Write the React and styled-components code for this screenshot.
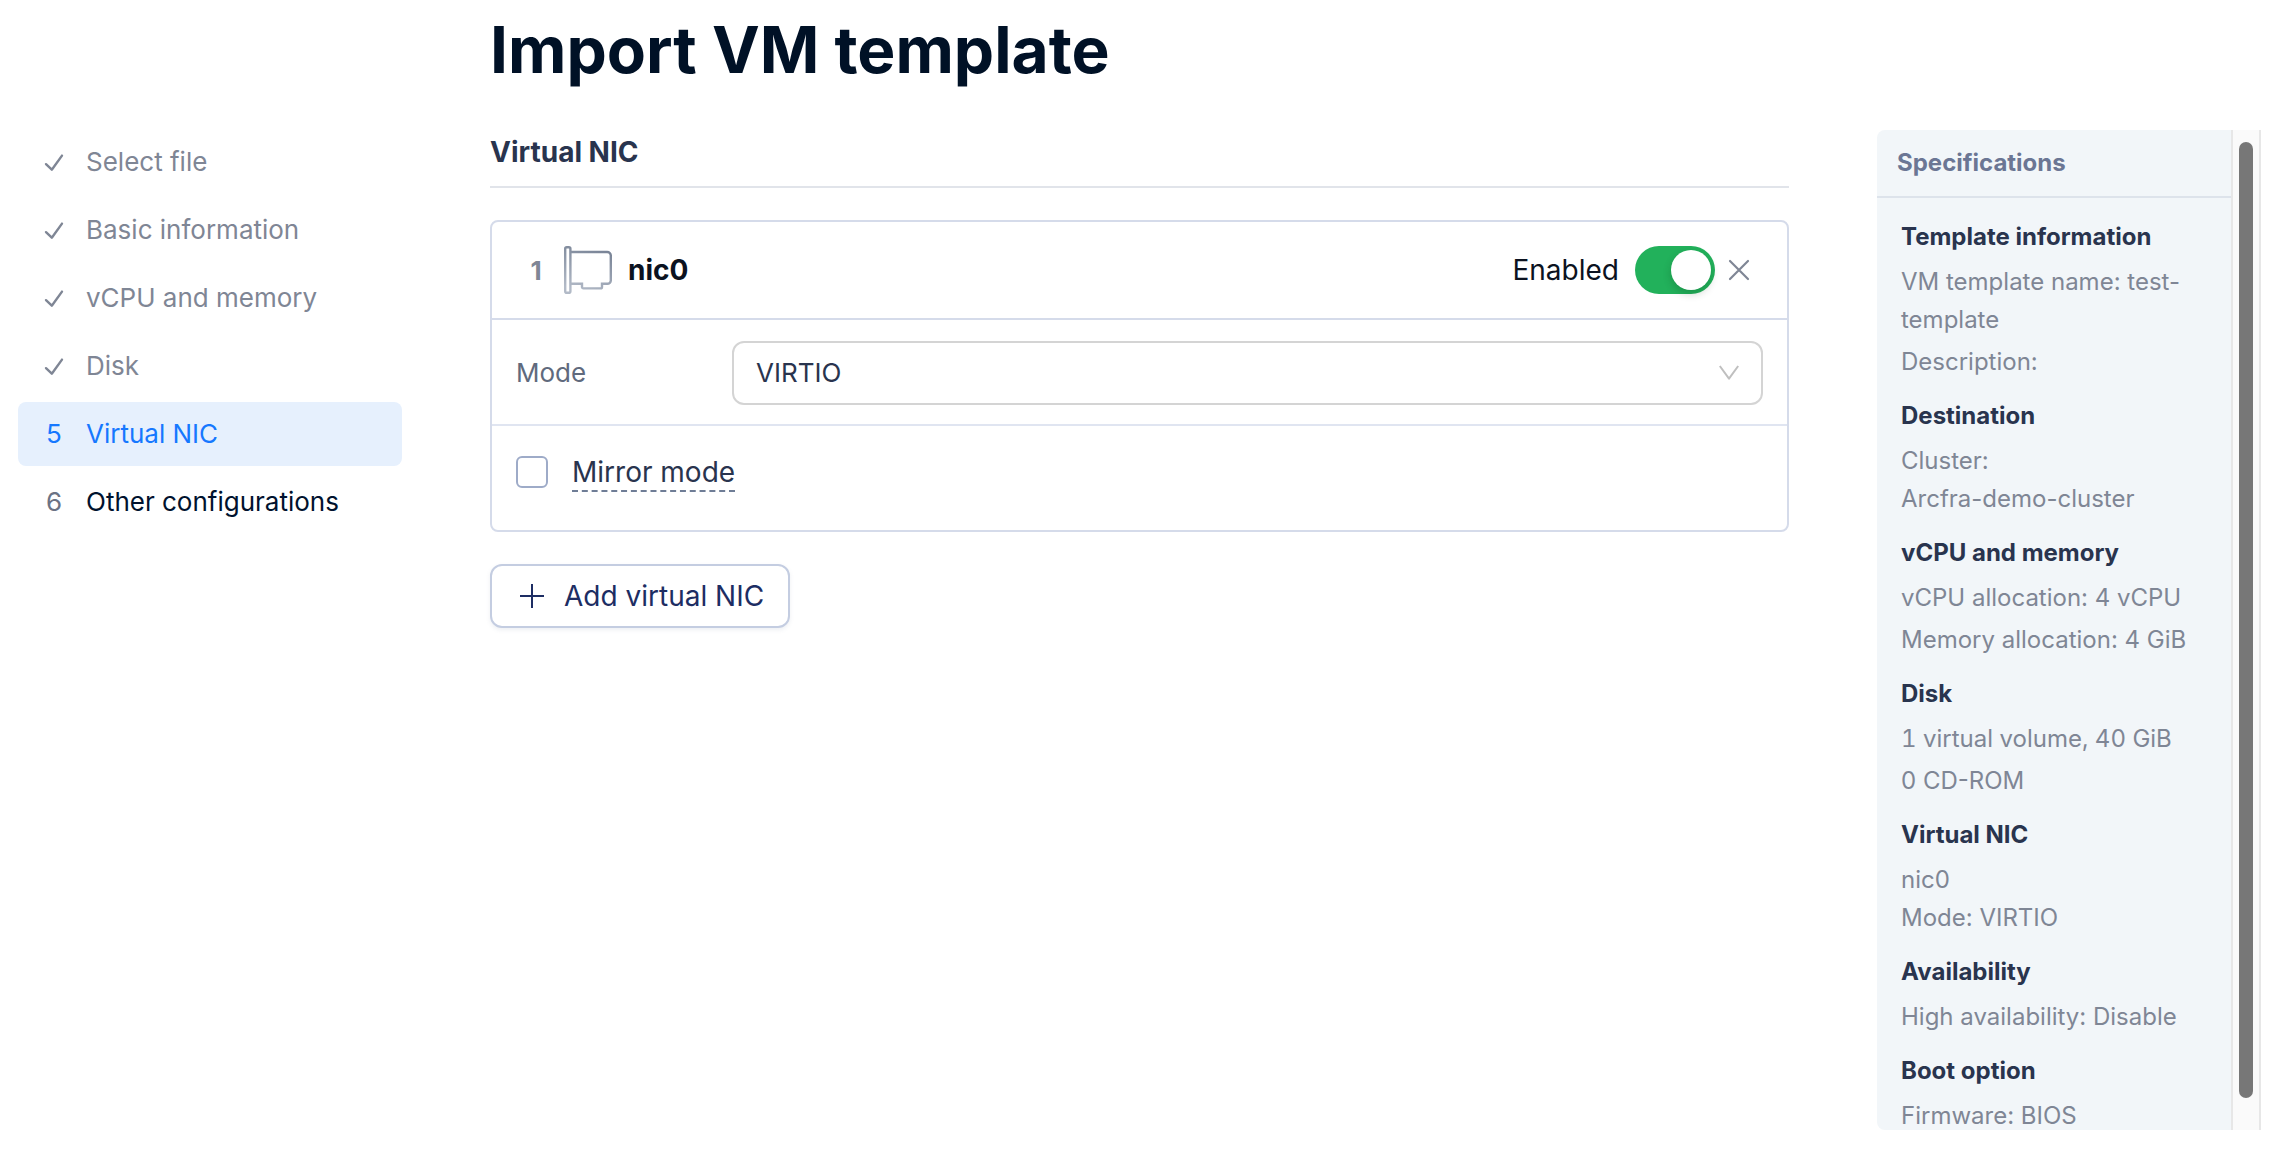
import React, { useState } from "react";
import styled, { createGlobalStyle } from "styled-components";

const GlobalStyle = createGlobalStyle`
  *, *::before, *::after { box-sizing: border-box; }
  body {
    margin: 0;
    background: #fff;
    color: #00122e;
    font-family: Inter, "Liberation Sans", sans-serif;
    font-size: 28px;
    -webkit-font-smoothing: antialiased;
  }
  button, select, input { font: inherit; color: inherit; margin: 0; }
  h1, h2, h3, p, ol { margin: 0; padding: 0; }
`;

const Page = styled.div`
  display: grid;
  grid-template-columns: 384px minmax(0, 1fr) 384px;
  grid-template-rows: auto minmax(0, 1fr);
  column-gap: 88px;
  row-gap: 30px;
  height: 100vh;
  padding: 0 19px 22px 18px;
`;

const PageTitle = styled.h1`
  grid-column: 2 / -1;
  font-size: 64px;
  font-weight: 700;
  line-height: 100px;
  color: #001126;
`;

const StepList = styled.ol`
  grid-column: 1;
  display: flex;
  flex-direction: column;
  gap: 4px;
  list-style: none;
`;

const stepColors = { done: "#7f8695", current: "#1678ff", next: "#00122e" };

const StepButton = styled.button`
  display: flex;
  align-items: center;
  gap: 20px;
  width: 100%;
  height: 64px;
  padding: 0 24px 2px;
  border: 0;
  border-radius: 8px;
  background: ${(p) => (p.$state === "current" ? "#e6f0fd" : "transparent")};
  color: ${(p) => stepColors[p.$state]};
  font-size: 26px;
  text-align: left;
  cursor: pointer;
`;

const StepMark = styled.span`
  display: flex;
  justify-content: center;
  width: 24px;
  color: ${(p) => (p.$state === "next" ? "#6b7385" : "inherit")};
`;

const Main = styled.main`
  display: flex;
  flex-direction: column;
  align-items: flex-start;
  gap: 32px;
`;

const SectionTitle = styled.h2`
  width: 100%;
  padding-bottom: 12px;
  border-bottom: 2px solid #e1e4ea;
  font-size: 28px;
  font-weight: 700;
  line-height: 44px;
  color: #29344e;
`;

const Card = styled.section`
  width: 100%;
  border: 2px solid #d5dbea;
  border-radius: 8px;
`;

const CardHeader = styled.header`
  display: flex;
  align-items: center;
  height: 98px;
  padding: 0 32px 0 24px;
  border-bottom: 2px solid #d5dbea;
`;

const CardIndex = styled.span`
  width: 40px;
  margin-right: 8px;
  text-align: center;
  font-size: 26px;
  font-weight: 700;
  color: #7f8695;
`;

const CardName = styled.h3`
  flex: 1;
  padding-left: 16px;
  font-size: 28px;
  font-weight: 700;
  color: #0b1220;
`;

const SwitchLabel = styled.label`
  display: flex;
  align-items: center;
  gap: 16px;
  color: #0b1220;
`;

const Switch = styled.input`
  appearance: none;
  display: flex;
  width: 80px;
  height: 48px;
  padding: 4px;
  border-radius: 24px;
  background: #b4bccc;
  cursor: pointer;
  &::before {
    content: "";
    width: 40px;
    height: 40px;
    border-radius: 50%;
    background: #fff;
    box-shadow: 0 4px 8px rgba(0, 35, 11, 0.2);
  }
  &:checked {
    justify-content: flex-end;
    background: #22b15b;
  }
`;

const IconButton = styled.button`
  display: flex;
  width: 32px;
  height: 32px;
  margin-left: 8px;
  padding: 0;
  border: 0;
  background: none;
  color: #7f8695;
  cursor: pointer;
`;

const FieldRow = styled.div`
  display: grid;
  grid-template-columns: 216px minmax(0, 1fr);
  align-items: center;
  padding: 21px 24px 19px;
  border-bottom: 2px solid #e0e5f1;
`;

const FieldLabel = styled.label`
  padding-bottom: 2px;
  font-size: 26px;
  color: #606a7d;
`;

const SelectBox = styled.div`
  display: grid;
  align-items: center;
  > * { grid-area: 1 / 1; }
  > svg {
    justify-self: end;
    margin-right: 24px;
    pointer-events: none;
  }
`;

const Select = styled.select`
  appearance: none;
  width: 100%;
  height: 64px;
  padding: 0 22px 2px;
  border: 2px solid #d4d4d4;
  border-radius: 12px;
  background: #fff;
  color: #29344e;
  font-size: 26px;
`;

const CheckRow = styled.div`
  display: flex;
  align-items: flex-start;
  gap: 24px;
  padding: 30px 24px 38px;
`;

const Checkbox = styled.input`
  appearance: none;
  width: 32px;
  height: 32px;
  border: 2px solid #9eabc8;
  border-radius: 6px;
  background: #fff;
  &:checked { background: #1678ff; border-color: #1678ff; }
`;

const HintLabel = styled.label`
  padding-bottom: 2px;
  border-bottom: 2px dashed #6f7d96;
  line-height: 32px;
  color: #29344e;
`;

const AddButton = styled.button`
  display: flex;
  align-items: center;
  gap: 16px;
  height: 64px;
  padding: 0 24px;
  border: 2px solid #c4cde1;
  border-radius: 12px;
  background: #fff;
  box-shadow: 0 2px 4px rgba(107, 125, 153, 0.12);
  color: #1d2d63;
  cursor: pointer;
`;

const Aside = styled.aside`
  display: flex;
  min-height: 0;
`;

const SpecPanel = styled.div`
  display: flex;
  flex-direction: column;
  flex: 1;
  min-width: 0;
  overflow: hidden;
  border-radius: 8px 0 0 8px;
  background: #f2f6f9;
  font-size: 24px;
  line-height: 38px;
`;

const SpecTitle = styled.h2`
  padding: 14px 20px;
  border-bottom: 2px solid #dde3eb;
  font-size: 24px;
  font-weight: 700;
  color: #6b7694;
`;

const SpecBody = styled.div`
  display: flex;
  flex-direction: column;
  gap: 16px;
  padding: 20px 24px;
`;

const SpecGroup = styled.section`
  display: flex;
  flex-direction: column;
  gap: 4px;
`;

const SpecHeading = styled.h3`
  margin-bottom: 3px;
  font-size: 24px;
  font-weight: 700;
  color: #29344e;
`;

const SpecText = styled.p`
  color: #7f8695;
  white-space: pre-line;
  font-variant-numeric: ${(p) => (p.$tabular ? "tabular-nums" : "normal")};
`;

const ScrollTrack = styled.div`
  display: flex;
  width: 30px;
  padding: 12px 6px 32px;
  border: solid #e7e7e7;
  border-width: 0 2px;
  background: #fafafa;
`;

const ScrollThumb = styled.div`
  width: 14px;
  border-radius: 7px;
  background: #777;
`;

const CheckIcon = () => (
  <svg width="24" height="24" viewBox="0 0 24 24" fill="none" stroke="currentColor" strokeWidth="2.4" strokeLinecap="round" strokeLinejoin="round" aria-hidden="true">
    <path d="M4 15.2L9.8 20.7L20 6.6" />
  </svg>
);

const NicIcon = () => (
  <svg width="48" height="48" viewBox="0 0 48 48" fill="none" strokeWidth="2.4" aria-hidden="true">
    <defs>
      <linearGradient id="nicStroke" gradientUnits="userSpaceOnUse" x1="40" y1="0" x2="24" y2="48">
        <stop offset="0" stopColor="#747f92" />
        <stop offset="1" stopColor="#b2bac7" />
      </linearGradient>
    </defs>
    <g stroke="url(#nicStroke)">
      <rect x="1.2" y="1.2" width="5.2" height="45.6" rx="1.6" />
      <path d="M7 6H43.2A3.6 3.6 0 0 1 46.8 9.6V34.4A3.4 3.4 0 0 1 43.4 37.8H38V41A1.4 1.4 0 0 1 36.6 42.4H19.4A1.4 1.4 0 0 1 18 41V37.8H7" />
    </g>
  </svg>
);

const CloseIcon = () => (
  <svg width="32" height="32" viewBox="0 0 32 32" fill="none" stroke="currentColor" strokeWidth="2.2" strokeLinecap="round" aria-hidden="true">
    <path d="M7 7L25 25M25 7L7 25" />
  </svg>
);

const ChevronIcon = () => (
  <svg width="20" height="20" viewBox="0 0 20 20" fill="none" stroke="#bfbfbf" strokeWidth="2" strokeLinejoin="round" aria-hidden="true">
    <path d="M0.8 3L10 15.6L19.2 3" />
  </svg>
);

const PlusIcon = () => (
  <svg width="32" height="32" viewBox="0 0 32 32" fill="none" stroke="currentColor" strokeWidth="2" aria-hidden="true">
    <path d="M4 16H28M16 4V28" />
  </svg>
);

const steps = [
  { name: "Select file", state: "done" },
  { name: "Basic information", state: "done" },
  { name: "vCPU and memory", state: "done" },
  { name: "Disk", state: "done" },
  { name: "Virtual NIC", state: "current" },
  { name: "Other configurations", state: "next" },
];

const specs = [
  { title: "Template information", lines: [{ text: "VM template name: test-template" }, { text: "Description:" }] },
  { title: "Destination", lines: [{ text: "Cluster:\nArcfra-demo-cluster" }] },
  { title: "vCPU and memory", lines: [{ text: "vCPU allocation: 4 vCPU" }, { text: "Memory allocation: 4 GiB" }] },
  { title: "Disk", lines: [{ text: "1 virtual volume, 40 GiB", tabular: true }, { text: "0 CD-ROM" }] },
  { title: "Virtual NIC", lines: [{ text: "nic0\nMode: VIRTIO" }] },
  { title: "Availability", lines: [{ text: "High availability: Disable" }] },
  { title: "Boot option", lines: [{ text: "Firmware: BIOS" }] },
];

export default function App() {
  const [enabled, setEnabled] = useState(true);
  const [mirror, setMirror] = useState(false);

  return (
    <>
      <GlobalStyle />
      <Page>
        <PageTitle>Import VM template</PageTitle>
        <StepList>
          {steps.map((step, i) => (
            <li key={step.name}>
              <StepButton type="button" $state={step.state} aria-current={step.state === "current" ? "step" : undefined}>
                <StepMark $state={step.state}>{step.state === "done" ? <CheckIcon /> : i + 1}</StepMark>
                {step.name}
              </StepButton>
            </li>
          ))}
        </StepList>
        <Main>
          <SectionTitle>Virtual NIC</SectionTitle>
          <Card>
            <CardHeader>
              <CardIndex>1</CardIndex>
              <NicIcon />
              <CardName>nic0</CardName>
              <SwitchLabel>
                Enabled
                <Switch type="checkbox" role="switch" checked={enabled} onChange={(e) => setEnabled(e.target.checked)} />
              </SwitchLabel>
              <IconButton type="button" aria-label="Remove">
                <CloseIcon />
              </IconButton>
            </CardHeader>
            <FieldRow>
              <FieldLabel htmlFor="mode">Mode</FieldLabel>
              <SelectBox>
                <Select id="mode" defaultValue="VIRTIO">
                  <option>VIRTIO</option>
                </Select>
                <ChevronIcon />
              </SelectBox>
            </FieldRow>
            <CheckRow>
              <Checkbox id="mirror" type="checkbox" checked={mirror} onChange={(e) => setMirror(e.target.checked)} />
              <HintLabel htmlFor="mirror">Mirror mode</HintLabel>
            </CheckRow>
          </Card>
          <AddButton type="button">
            <PlusIcon />
            Add virtual NIC
          </AddButton>
        </Main>
        <Aside>
          <SpecPanel>
            <SpecTitle>Specifications</SpecTitle>
            <SpecBody>
              {specs.map((group) => (
                <SpecGroup key={group.title}>
                  <SpecHeading>{group.title}</SpecHeading>
                  {group.lines.map((line) => (
                    <SpecText key={line.text} $tabular={line.tabular}>{line.text}</SpecText>
                  ))}
                </SpecGroup>
              ))}
            </SpecBody>
          </SpecPanel>
          <ScrollTrack>
            <ScrollThumb />
          </ScrollTrack>
        </Aside>
      </Page>
    </>
  );
}
